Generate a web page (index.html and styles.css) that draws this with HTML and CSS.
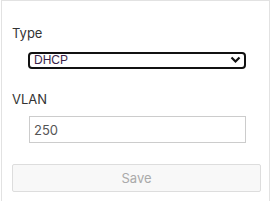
FILE: index.html
```html
<!DOCTYPE html>
<html lang="en">
<head>
    <meta charset="UTF-8">
    <meta name="viewport" content="width=device-width, initial-scale=1.0">
    <title>Port settings</title>
    <link rel="stylesheet" href="styles.css">
</head>
<body>
    <div class="panel">
        <div class="field">
            <label class="label" for="type">Type</label>
            <div class="select-wrap">
                <select id="type" class="select">
                    <option>DHCP</option>
                    <option>Static</option>
                </select>
                <svg class="chevron" width="11" height="8" viewBox="0 0 11 8">
                    <path d="M1.5 1.5 L5.5 5.5 L9.5 1.5" fill="none" stroke="#111" stroke-width="2.2"/>
                </svg>
            </div>
        </div>
        <div class="field">
            <label class="label" for="vlan">VLAN</label>
            <input id="vlan" class="input" type="text" value="250">
        </div>
        <button class="save" disabled>Save</button>
    </div>
</body>
</html>
```

FILE: styles.css
```css
body{
    margin:0;
    font-family:Inter, "Liberation Sans", sans-serif;
}
.panel{
    margin-left:1px;
    width:269px;
    height:201px;
    box-sizing:border-box;
    border:1px solid #e2e2e2;
    border-bottom:none;
    padding:24px 8px 0 10px;
}
.field{
    display:flex;
    flex-direction:column;
}
.label{
    font-size:13px;
    line-height:16px;
    color:#333;
}
.select-wrap{
    position:relative;
    margin:11px 0 0 16px;
    width:218px;
}
.select{
    appearance:none;
    -webkit-appearance:none;
    display:block;
    width:100%;
    height:17px;
    box-sizing:border-box;
    border:2px solid #111;
    border-radius:4px;
    background:#fff;
    padding:0 0 0 4px;
    font-family:"Liberation Sans", Arial, sans-serif;
    font-size:12px;
    line-height:13px;
    color:#3a1f4a;
    outline:none;
}
.chevron{
    position:absolute;
    right:5px;
    top:4px;
}
.field + .field{
    margin-top:22px;
}
.input{
    margin:9px 0 0 17px;
    width:217px;
    height:27px;
    box-sizing:border-box;
    border:1px solid #ccc;
    padding:0 4px;
    font-family:Inter, "Liberation Sans", sans-serif;
    font-size:13px;
    color:#555;
    outline:none;
}
.save{
    margin-top:21px;
    width:249px;
    height:28px;
    border:1px solid #ddd;
    border-radius:2px;
    background:#f8f8f8;
    font-family:Inter, "Liberation Sans", sans-serif;
    font-size:13px;
    color:#aaa;
}
```
